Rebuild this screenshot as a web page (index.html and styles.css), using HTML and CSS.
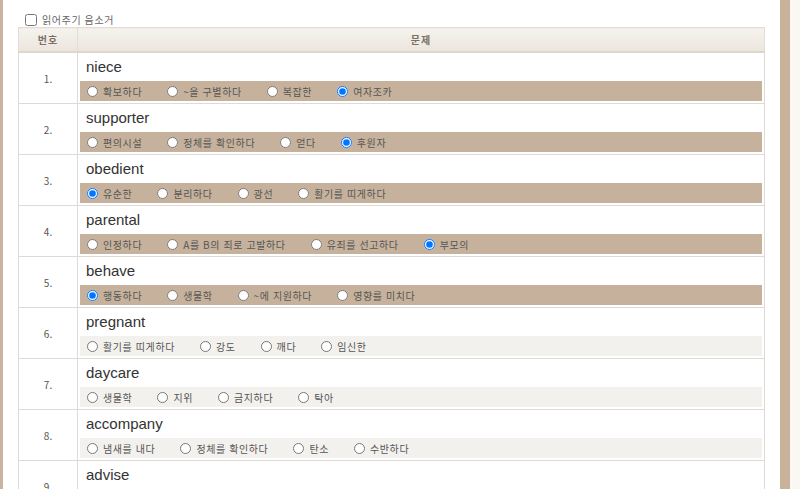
FILE: index.html
```html
<!DOCTYPE html>
<html lang="ko">
<head>
<meta charset="utf-8">
<title>단어 시험</title>
<link rel="stylesheet" href="styles.css">
</head>
<body>
<div class="page">
  <label class="mute"><input type="checkbox" class="mute-box"><span>읽어주기 음소거</span></label>
  <table class="quiz">
    <thead>
      <tr><th class="col-num">번호</th><th>문제</th></tr>
    </thead>
    <tbody>
      <tr>
        <td class="num">1.</td>
        <td class="q"><div class="word">niece</div>
          <div class="opts done">
            <label class="opt"><input type="radio" name="q1"><span>확보하다</span></label>
            <label class="opt"><input type="radio" name="q1"><span>~을 구별하다</span></label>
            <label class="opt"><input type="radio" name="q1"><span>복잡한</span></label>
            <label class="opt"><input type="radio" name="q1" checked><span>여자조카</span></label>
          </div></td>
      </tr>
      <tr>
        <td class="num">2.</td>
        <td class="q"><div class="word">supporter</div>
          <div class="opts done">
            <label class="opt"><input type="radio" name="q2"><span>편의시설</span></label>
            <label class="opt"><input type="radio" name="q2"><span>정체를 확인하다</span></label>
            <label class="opt"><input type="radio" name="q2"><span>얻다</span></label>
            <label class="opt"><input type="radio" name="q2" checked><span>후원자</span></label>
          </div></td>
      </tr>
      <tr>
        <td class="num">3.</td>
        <td class="q"><div class="word">obedient</div>
          <div class="opts done">
            <label class="opt"><input type="radio" name="q3" checked><span>유순한</span></label>
            <label class="opt"><input type="radio" name="q3"><span>분리하다</span></label>
            <label class="opt"><input type="radio" name="q3"><span>광선</span></label>
            <label class="opt"><input type="radio" name="q3"><span>활기를 띠게하다</span></label>
          </div></td>
      </tr>
      <tr>
        <td class="num">4.</td>
        <td class="q"><div class="word">parental</div>
          <div class="opts done">
            <label class="opt"><input type="radio" name="q4"><span>인정하다</span></label>
            <label class="opt"><input type="radio" name="q4"><span>A를 B의 죄로 고발하다</span></label>
            <label class="opt"><input type="radio" name="q4"><span>유죄를 선고하다</span></label>
            <label class="opt"><input type="radio" name="q4" checked><span>부모의</span></label>
          </div></td>
      </tr>
      <tr>
        <td class="num">5.</td>
        <td class="q"><div class="word">behave</div>
          <div class="opts done">
            <label class="opt"><input type="radio" name="q5" checked><span>행동하다</span></label>
            <label class="opt"><input type="radio" name="q5"><span>생물학</span></label>
            <label class="opt"><input type="radio" name="q5"><span>~에 지원하다</span></label>
            <label class="opt"><input type="radio" name="q5"><span>영향를 미치다</span></label>
          </div></td>
      </tr>
      <tr>
        <td class="num">6.</td>
        <td class="q"><div class="word">pregnant</div>
          <div class="opts">
            <label class="opt"><input type="radio" name="q6"><span>활기를 띠게하다</span></label>
            <label class="opt"><input type="radio" name="q6"><span>강도</span></label>
            <label class="opt"><input type="radio" name="q6"><span>깨다</span></label>
            <label class="opt"><input type="radio" name="q6"><span>임신한</span></label>
          </div></td>
      </tr>
      <tr>
        <td class="num">7.</td>
        <td class="q"><div class="word">daycare</div>
          <div class="opts">
            <label class="opt"><input type="radio" name="q7"><span>생물학</span></label>
            <label class="opt"><input type="radio" name="q7"><span>지위</span></label>
            <label class="opt"><input type="radio" name="q7"><span>금지하다</span></label>
            <label class="opt"><input type="radio" name="q7"><span>탁아</span></label>
          </div></td>
      </tr>
      <tr>
        <td class="num">8.</td>
        <td class="q"><div class="word">accompany</div>
          <div class="opts">
            <label class="opt"><input type="radio" name="q8"><span>냄새를 내다</span></label>
            <label class="opt"><input type="radio" name="q8"><span>정체를 확인하다</span></label>
            <label class="opt"><input type="radio" name="q8"><span>탄소</span></label>
            <label class="opt"><input type="radio" name="q8"><span>수반하다</span></label>
          </div></td>
      </tr>
      <tr>
        <td class="num">9.</td>
        <td class="q"><div class="word">advise</div>
          <div class="opts"></div></td>
      </tr>
    </tbody>
  </table>
</div>
</body>
</html>
```
FILE: styles.css
```css
html, body {
  margin: 0;
  padding: 0;
}
body {
  background: #fbf8f3;
  font-family: "Noto Sans CJK KR", "Liberation Sans", sans-serif;
  height: 489px;
  overflow: hidden;
}
.page {
  width: 762px;
  min-height: 489px;
  background: #ffffff;
  border-left: 3px solid #c9b59f;
  border-right: 10px solid #c8b299;
  padding-left: 15px;
  box-sizing: content-box;
  padding-top: 12px;
}
.mute {
  display: flex;
  align-items: center;
  height: 15px;
  margin-left: 6px;
  font-size: 10px;
  color: #666;
  letter-spacing: 0.6px;
}
.mute-box {
  width: 12px;
  height: 12px;
  margin: 0 5px 0 1px;
}
.quiz {
  width: 747px;
  border-collapse: collapse;
  table-layout: fixed;
}
.quiz th {
  height: 23px;
  padding: 0;
  font-size: 10px;
  font-weight: bold;
  color: #7a7068;
  letter-spacing: 1px;
  background: linear-gradient(#f6f3ee, #ebe5dc);
  border: 1px solid #e2ddd6;
  border-bottom: 2px solid #ddd6cc;
  text-align: center;
}
.quiz th.col-num {
  width: 58px;
}
.quiz td {
  border: 1px solid #dedbd7;
  padding: 0 2px 2px 2px;
}
.quiz td.num {
  text-align: center;
  vertical-align: middle;
  font-size: 10px;
  color: #555;
  padding: 0;
}
.word {
  height: 28px;
  line-height: 27px;
  padding-left: 6px;
  font-family: "Liberation Sans", Arial, sans-serif;
  font-size: 15px;
  color: #333;
}
.opts {
  display: flex;
  align-items: center;
  height: 20px;
  padding-left: 7px;
  background: #f3f1ee;
}
.opts.done {
  background: #c6b29c;
}
.opt {
  display: flex;
  align-items: center;
  margin-right: 25px;
  font-size: 10px;
  color: #555;
  letter-spacing: 0.6px;
}
.opt input {
  width: 11px;
  height: 11px;
  margin: 0 5px 0 0;
}
```
